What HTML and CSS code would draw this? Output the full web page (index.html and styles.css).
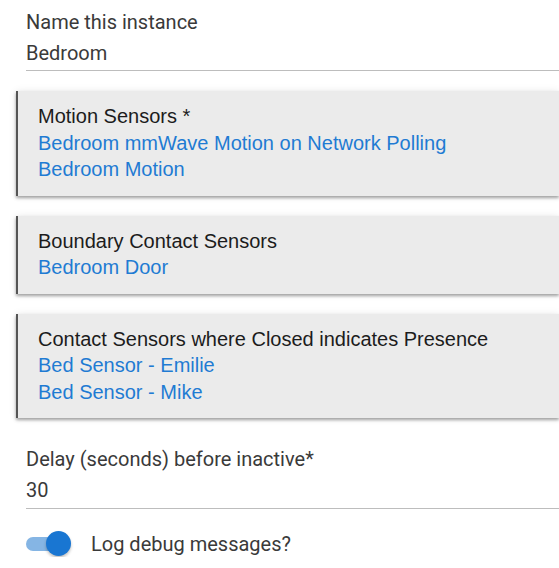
FILE: index.html
```html
<!DOCTYPE html>
<html>
<head>
<meta charset="utf-8">
<link rel="stylesheet" href="styles.css">
</head>
<body>
<div class="page">
  <div class="field">
    <div class="field-label">Name this instance</div>
    <div class="field-value">Bedroom</div>
  </div>

  <div class="card">
    <div class="card-title">Motion Sensors *</div>
    <div class="card-item">Bedroom mmWave Motion on Network Polling</div>
    <div class="card-item">Bedroom Motion</div>
  </div>

  <div class="card">
    <div class="card-title">Boundary Contact Sensors</div>
    <div class="card-item">Bedroom Door</div>
  </div>

  <div class="card">
    <div class="card-title">Contact Sensors where Closed indicates Presence</div>
    <div class="card-item">Bed Sensor - Emilie</div>
    <div class="card-item">Bed Sensor - Mike</div>
  </div>

  <div class="field field-delay">
    <div class="field-label">Delay (seconds) before inactive*</div>
    <div class="field-value">30</div>
  </div>

  <div class="switch-row">
    <div class="switch">
      <div class="switch-track"></div>
      <div class="switch-thumb"></div>
    </div>
    <div class="switch-label">Log debug messages?</div>
  </div>
</div>
</body>
</html>
```

FILE: styles.css
```css
html, body {
  margin: 0;
  padding: 0;
  background: #ffffff;
  overflow: hidden;
}

.page {
  padding-top: 9px;
  display: flex;
  flex-direction: column;
}

.field {
  margin-left: 26px;
  font-family: Roboto, "Noto Sans", sans-serif;
  font-size: 20px;
  color: #3a3a3a;
  border-bottom: 1px solid #bdbdbd;
  padding-bottom: 5px;
}

.field-label {
  line-height: 26px;
}

.field-value {
  line-height: 26px;
  margin-top: 5px;
}

.field:first-child {
  padding-bottom: 4px;
}

.card {
  margin-left: 16px;
  margin-top: 20px;
  background: #ebebeb;
  border-left: 2px solid #555555;
  padding: 12px 20px 13px 20px;
  box-shadow: 0 2px 3px rgba(0, 0, 0, 0.35), 0 0 8px rgba(0, 0, 0, 0.08);
  font-family: "Liberation Sans", Arial, sans-serif;
  font-size: 20px;
  line-height: 26.5px;
}

.card-title {
  color: #1c1c1c;
}

.card-item {
  color: #1f7bd3;
}

.field-delay {
  margin-top: 28px;
}

.switch-row {
  margin-left: 26px;
  margin-top: 22px;
  display: flex;
  align-items: center;
  gap: 21px;
}

.switch {
  position: relative;
  width: 44px;
  height: 26px;
  flex: none;
}

.switch-track {
  position: absolute;
  left: 0;
  top: 6px;
  width: 40px;
  height: 14px;
  border-radius: 7px;
  background: #85b5e4;
}

.switch-thumb {
  position: absolute;
  left: 20px;
  top: 0;
  width: 25px;
  height: 25px;
  border-radius: 50%;
  background: #1976d2;
  box-shadow: 0 2px 3px rgba(0, 0, 0, 0.25);
}

.switch-label {
  font-family: Roboto, "Noto Sans", sans-serif;
  font-size: 20px;
  color: #3a3a3a;
  line-height: 26px;
}
```
